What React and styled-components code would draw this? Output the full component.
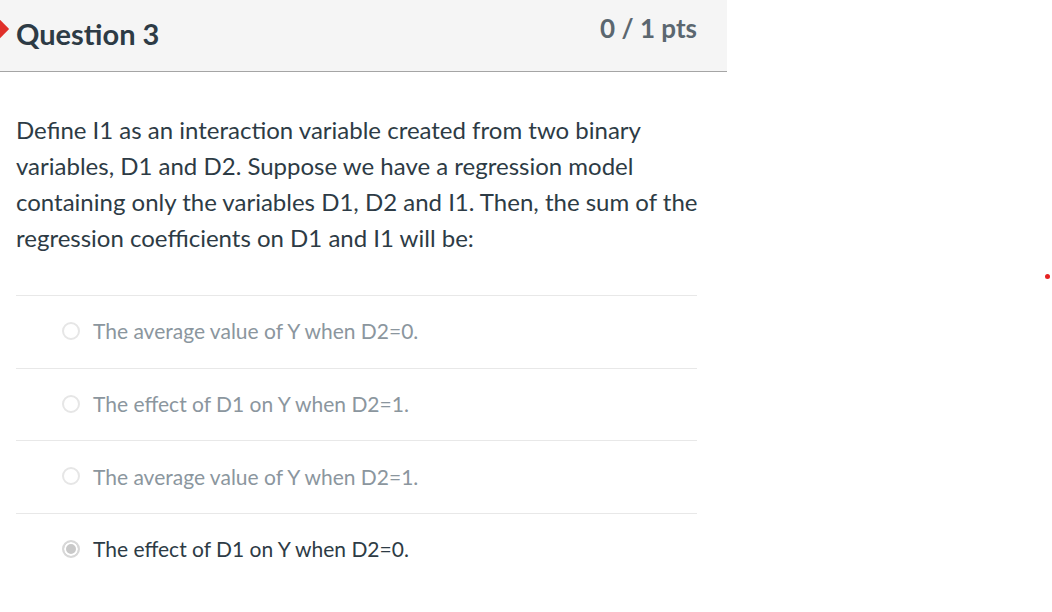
import React from "react";
import styled, { createGlobalStyle } from "styled-components";

const Global = createGlobalStyle`
  html, body { margin: 0; padding: 0; background: #fff; }
  body { font-family: Lato, "Liberation Sans", sans-serif; color: #2d3b45; }
`;

const Page = styled.div`
  position: relative;
  width: 1052px;
  height: 612px;
  overflow: hidden;
`;

const Card = styled.div`
  width: 727px;
`;

const Header = styled.div`
  position: relative;
  height: 71px;
  background: #f5f5f5;
  border-bottom: 1px solid #a5a5a5;
  display: flex;
  justify-content: space-between;
  padding: 0 30px 0 16px;
  box-sizing: content-box;
  width: 681px;
  overflow: hidden;
`;

const Marker = styled.span`
  position: absolute;
  left: -15px;
  top: 19px;
  width: 20px;
  height: 20px;
  background: #e0302a;
  transform: rotate(45deg);
`;

const Title = styled.h2`
  margin: 0;
  padding-top: 17px;
  font-size: 29px;
  font-weight: 700;
  color: #2d3b45;
  line-height: 34px;
`;

const Points = styled.div`
  padding-top: 12px;
  font-size: 26px;
  font-weight: 700;
  color: #5b6770;
  line-height: 32px;
`;

const Body = styled.div`
  padding: 40px 30px 0 16px;
`;

const Question = styled.p`
  margin: 0 -12px 0 0;
  font-size: 24px;
  line-height: 36px;
  color: #2d3b45;
`;

const Answers = styled.div`
  margin-top: 39px;
`;

const Answer = styled.div`
  border-top: 1px solid #e8e8e8;
  height: 72.7px;
  box-sizing: border-box;
  padding-bottom: 2px;
  display: flex;
  align-items: center;
  padding-left: 46px;
  gap: 13px;
  font-size: 21px;
  color: ${(p) => (p.$selected ? "#2d3b45" : "#8b969e")};
`;

const Radio = styled.span`
  width: 14px;
  height: 14px;
  border-radius: 50%;
  border: 2px solid ${(p) => (p.$selected ? "#d8d8d8" : "#e6e6e6")};
  background: ${(p) => (p.$selected ? "#c9c9c9" : "#fff")};
  box-shadow: ${(p) => (p.$selected ? "inset 0 0 0 2px #fff" : "none")};
  flex: none;
`;

const Dot = styled.span`
  position: absolute;
  left: 1045px;
  top: 274px;
  width: 5px;
  height: 5px;
  border-radius: 50%;
  background: #e52222;
`;

const answers = [
  "The average value of Y when D2=0.",
  "The effect of D1 on Y when D2=1.",
  "The average value of Y when D2=1.",
  "The effect of D1 on Y when D2=0.",
];

export default function App() {
  return (
    <Page>
      <Global />
      <Card>
        <Header>
          <Marker />
          <Title>Question 3</Title>
          <Points>0 / 1 pts</Points>
        </Header>
        <Body>
          <Question>
            Define I1 as an interaction variable created from two binary
            variables, D1 and D2. Suppose we have a regression model
            containing only the variables D1, D2 and I1. Then, the sum of the
            regression coefficients on D1 and I1 will be:
          </Question>
          <Answers>
            {answers.map((a, i) => (
              <Answer key={i} $selected={i === 3}>
                <Radio $selected={i === 3} />
                {a}
              </Answer>
            ))}
          </Answers>
        </Body>
      </Card>
      <Dot />
    </Page>
  );
}
